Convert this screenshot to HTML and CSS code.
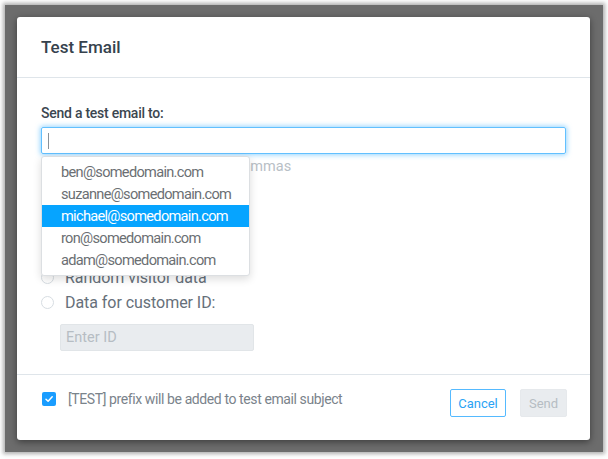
FILE: index.html
```html
<!DOCTYPE html>
<html>
<head>
<meta charset="utf-8">
<link rel="stylesheet" href="styles.css">
</head>
<body>
<div class="frame">
  <div class="modal">
    <div class="modal-header">Test Email</div>
    <div class="modal-body">
      <div class="field-label">Send a test email to:</div>
      <div class="email-input focused"><span class="caret"></span></div>
      <div class="hint">Separate multiple emails with commas</div>

      <div class="group-label">Personalize with:</div>
      <div class="radio-list">
        <div class="radio-row"><span class="radio checked"></span><span>Current visitor data</span></div>
        <div class="radio-row"><span class="radio"></span><span>Random visitor data</span></div>
        <div class="radio-row"><span class="radio"></span><span>Data for customer ID:</span></div>
      </div>
      <div class="id-input">Enter ID</div>

      <ul class="dropdown">
        <li>ben@somedomain.com</li>
        <li>suzanne@somedomain.com</li>
        <li class="active">michael@somedomain.com</li>
        <li>ron@somedomain.com</li>
        <li>adam@somedomain.com</li>
      </ul>
    </div>
    <div class="modal-footer">
      <div class="check-wrap">
        <span class="checkbox"><svg width="10" height="10" viewBox="0 0 10 10"><path d="M2 5.2 L4.1 7.2 L8.2 2.8" fill="none" stroke="#fff" stroke-width="1.5" stroke-linecap="round" stroke-linejoin="round"/></svg></span>
        <span class="check-text">[TEST] prefix will be added to test email subject</span>
      </div>
      <div class="buttons">
        <button class="btn btn-cancel">Cancel</button>
        <button class="btn btn-send">Send</button>
      </div>
    </div>
  </div>
</div>
</body>
</html>
```

FILE: styles.css
```css
html, body {
  margin: 0;
  padding: 0;
  background: #ffffff;
  font-family: Roboto, "Liberation Sans", sans-serif;
}

body {
  padding: 5px 5px 0 5px;
  width: 608px;
  height: 459px;
  box-sizing: border-box;
  overflow: hidden;
}

.frame {
  width: 598px;
  height: 447px;
  box-sizing: border-box;
  padding: 12px 13px 12px 12px;
  background: #6c6c6c;
  box-shadow: 0 0 4px 2px rgba(110, 110, 110, 0.55);
}

.modal {
  width: 573px;
  height: 423px;
  background: #fff;
  border-radius: 3px;
  box-shadow: 0 2px 7px rgba(0, 0, 0, 0.45);
  display: flex;
  flex-direction: column;
}

.modal-header {
  height: 61px;
  box-sizing: border-box;
  padding: 0 24px;
  display: flex;
  align-items: center;
  font-size: 17px;
  font-weight: 500;
  color: #36424d;
  border-bottom: 1px solid #dfe5ea;
}

.modal-body {
  position: relative;
  flex: 1;
  padding: 25px 24px 0 24px;
}

.field-label {
  font-size: 14px;
  font-weight: 500;
  letter-spacing: -0.25px;
  color: #3b4650;
  line-height: 20px;
  margin-bottom: 4px;
}

.email-input {
  height: 27px;
  box-sizing: border-box;
  border: 1px solid #62c0ff;
  border-radius: 2px;
  box-shadow: 0 0 5px 1px rgba(80, 185, 255, 0.6);
  padding: 4px 6px;
  display: flex;
  align-items: center;
}

.caret {
  width: 1px;
  height: 16px;
  background: #8a9198;
}

.hint {
  margin-top: 3px;
  font-size: 14.5px;
  line-height: 20px;
  color: #b8c0c6;
}

.group-label {
  margin-top: 39px;
  font-size: 14px;
  font-weight: 500;
  line-height: 20px;
  color: #3b4650;
}

.radio-list {
  margin-top: 5px;
  display: flex;
  flex-direction: column;
}

.radio-row {
  height: 24.5px;
  display: flex;
  align-items: center;
  gap: 11px;
  font-size: 16px;
  letter-spacing: -0.05px;
  color: #66707a;
}

.radio {
  width: 13px;
  height: 13px;
  border: 1px solid #d7dde2;
  border-radius: 50%;
  box-sizing: border-box;
  flex: none;
}

.radio.checked {
  border: 4px solid #1a9fff;
}

.id-input {
  margin: 9px 0 0 19px;
  width: 194px;
  height: 27px;
  box-sizing: border-box;
  background: #e9ecef;
  border: 1px solid #e1e5e8;
  border-radius: 2px;
  padding: 0 5px;
  display: flex;
  align-items: center;
  font-size: 14.5px;
  color: #b6bdc3;
}

.dropdown {
  position: absolute;
  left: 24px;
  top: 78px;
  width: 209px;
  margin: 0;
  padding: 4px 0;
  list-style: none;
  background: #fff;
  border: 1px solid #dcdfe2;
  border-radius: 3px;
  box-shadow: 0 3px 8px rgba(0, 0, 0, 0.14);
  box-sizing: border-box;
}

.dropdown li {
  height: 22px;
  line-height: 22px;
  padding-left: 19px;
  font-size: 14.6px;
  letter-spacing: -0.7px;
  color: #6b6f73;
  white-space: nowrap;
}

.dropdown li.active {
  background: #06a4ff;
  color: #ffffff;
}

.modal-footer {
  height: 66px;
  box-sizing: border-box;
  border-top: 1px solid #dfe5ea;
  padding: 14px 23px 0 24px;
  display: flex;
  justify-content: space-between;
  align-items: flex-start;
}

.check-wrap {
  display: flex;
  align-items: center;
  gap: 12px;
  margin-top: 0;
  margin-left: 1px;
}

.checkbox {
  width: 14px;
  height: 14px;
  border-radius: 2px;
  background: #1a9dff;
  display: flex;
  align-items: center;
  justify-content: center;
}

.check-text {
  font-size: 14px;
  letter-spacing: -0.4px;
  line-height: 20px;
  color: #7a838b;
}

.buttons {
  display: flex;
  gap: 14px;
}

.btn {
  height: 28px;
  box-sizing: border-box;
  border-radius: 2px;
  font-family: Roboto, "Liberation Sans", sans-serif;
  font-size: 13px;
  padding: 0;
  cursor: default;
}

.btn-cancel {
  width: 56px;
  background: #fff;
  border: 1px solid #55baff;
  color: #2ba3f4;
}

.btn-send {
  width: 47px;
  background: #e9ecef;
  border: 1px solid #e6e9ec;
  color: #b6bdc3;
}
```
